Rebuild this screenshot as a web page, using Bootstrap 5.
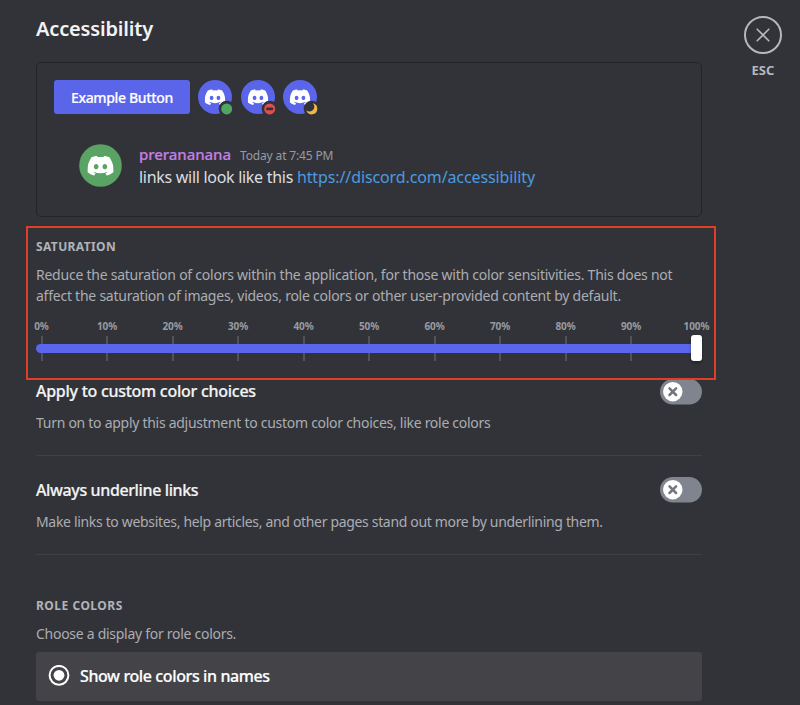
<!DOCTYPE html>
<html lang="en" data-bs-theme="dark">
<head>
<meta charset="utf-8">
<meta name="viewport" content="width=device-width, initial-scale=1">
<title>Accessibility</title>
<link href="https://cdn.jsdelivr.net/npm/bootstrap@5.3.0/dist/css/bootstrap.min.css" rel="stylesheet">
<style>
  body { background: #323338; color: #b5bac1; font: 400 14px/20px "Noto Sans", "Liberation Sans", sans-serif; }
  .settings { width: 666px; margin-left: 36px; padding-top: 17px; }
  .page-title { font-size: 20px; line-height: 24px; font-weight: 600; letter-spacing: -.17px; color: #f2f3f5; margin-bottom: 21px; }
  .preview .btn, .user-name, .option h2, .role-choice { -webkit-text-stroke: .2px currentColor; }

  .preview { height: 155px; padding: 17px; border: 1.5px solid #232428; border-radius: 5px; background: none; }
  .preview .btn { width: 136px; height: 34px; padding: 0; border: 0; border-radius: 3px; background: #5a65ea; color: #fff; font-size: 14px; font-weight: 500; letter-spacing: -.34px; }
  .status-list { gap: 8.5px; margin-left: 8px; }
  .status-list svg { width: 34px; height: 34px; display: block; overflow: visible; }
  .message { margin: 29px 0 0 25px; gap: 17px; }
  .message svg { width: 43px; height: 43px; flex: none; margin-top: 1px; }
  .user-name { font-size: 15px; line-height: 22px; font-weight: 500; letter-spacing: -.05px; color: #c57ee4; }
  .timestamp { font-size: 12px; letter-spacing: -.15px; color: #949ba4; margin-left: 1px; }
  .message-text { font-size: 16px; line-height: 23px; letter-spacing: -.29px; color: #dbdee1; }
  .message-text a { color: #4a9be0; letter-spacing: -.11px; text-decoration: none; }

  .highlight { z-index: 1; height: 154px; margin: 9px -14px 0 -10px; padding: 11px 12px 0 8px; border: 2px solid #e03e26; }
  .eyebrow { font-size: 12px; line-height: 16px; font-weight: 700; letter-spacing: .38px; color: #b0b3b9; margin: 0; }
  .roles .eyebrow { letter-spacing: .5px; }
  .hint { letter-spacing: -.28px; color: #abadb3; margin: 0; }
  .highlight .hint { line-height: 21.3px; letter-spacing: -.24px; margin-top: 9px; }

  .slider { display: grid; margin-top: 12px; width: 666px; }
  .slider > * { grid-column: 1; }
  .marks { grid-row: 1; padding: 0 5px 0 5px; }
  .marks > div { width: 1px; }
  .marks span { font-size: 10px; line-height: 14px; font-weight: 700; letter-spacing: -.1px; color: #989ba1; white-space: nowrap; }
  .marks i { width: 2px; height: 25px; margin-top: 3px; background: #505259; flex: none; }
  .track { grid-row: 1; height: 9px; margin-top: 25px; width: 661px; border-radius: 5px; background: #5b66ec; z-index: 1; }
  .thumb { grid-row: 1; justify-self: end; width: 11px; height: 26px; margin-top: 16px; border-radius: 3px; background: #fff; box-shadow: 0 2px 3px rgba(0,0,0,.3); z-index: 2; }

  .option { padding-bottom: 22px; border-bottom: 1px solid #3e4046; }
  .option + .option { margin-top: 22.5px; }
  .option h2 { font-size: 16px; line-height: 23px; font-weight: 500; letter-spacing: -.27px; color: #f2f3f5; margin: 0; }
  .option + .option h2 { letter-spacing: -.38px; }
  .option .hint { margin-top: 10px; }
  .option + .option .hint { letter-spacing: -.33px; }
  .switch { width: 42px; height: 26px; margin-top: -1.5px; flex: none; }
  .roles { margin-top: 43px; }
  .roles .hint { margin-top: 10px; }
  .role-choice { height: 49px; margin-top: 8px; padding-left: 12px; gap: 10px; border-radius: 3px; background: #434348; color: #fff; font-size: 16px; font-weight: 500; letter-spacing: -.39px; }

  .close-tool { right: 17px; top: 16px; width: 40px; color: #b5b8bd; font-size: 13px; line-height: 16px; font-weight: 700; }
</style>
</head>
<body class="overflow-hidden vh-100">
<svg class="d-none">
  <symbol id="logo" viewBox="0 1.9 16 12.2"><path fill="#fff" d="M13.545 2.907a13.227 13.227 0 0 0-3.257-1.011.05.05 0 0 0-.052.025c-.141.25-.297.577-.406.833a12.19 12.19 0 0 0-3.658 0 8.258 8.258 0 0 0-.412-.833.051.051 0 0 0-.052-.025c-1.125.194-2.22.534-3.257 1.011a.041.041 0 0 0-.021.018C.356 6.024-.213 9.047.066 12.032c.001.014.01.028.021.037a13.276 13.276 0 0 0 3.995 2.02.05.05 0 0 0 .056-.019c.308-.42.582-.863.818-1.329a.05.05 0 0 0-.01-.059.051.051 0 0 0-.018-.011 8.875 8.875 0 0 1-1.248-.595.05.05 0 0 1-.02-.066.051.051 0 0 1 .015-.019c.084-.063.168-.129.248-.195a.05.05 0 0 1 .051-.007c2.619 1.196 5.454 1.196 8.041 0a.052.052 0 0 1 .053.007c.08.066.164.132.248.195a.051.051 0 0 1-.004.085 8.254 8.254 0 0 1-1.249.594.05.05 0 0 0-.03.03.052.052 0 0 0 .003.041c.24.465.515.909.817 1.329a.05.05 0 0 0 .056.019 13.235 13.235 0 0 0 4.001-2.02.049.049 0 0 0 .021-.037c.334-3.451-.559-6.449-2.366-9.106a.034.034 0 0 0-.02-.019Zm-8.198 7.307c-.789 0-1.438-.724-1.438-1.612 0-.889.637-1.613 1.438-1.613.807 0 1.45.73 1.438 1.613 0 .888-.637 1.612-1.438 1.612Zm5.316 0c-.788 0-1.438-.724-1.438-1.612 0-.889.637-1.613 1.438-1.613.807 0 1.451.73 1.438 1.613 0 .888-.631 1.612-1.438 1.612Z"/></symbol>
  <symbol id="avatar" viewBox="0 0 34 34" overflow="visible"><circle cx="17" cy="17" r="17" fill="#5a65ea"/><use href="#logo" x="6.7" y="9.3" width="20.6" height="15.7"/><circle cx="28.7" cy="28.7" r="8" fill="#323338"/></symbol>
  <symbol id="switch-off" viewBox="0 0 42 26"><rect width="42" height="25.5" rx="12.75" fill="#80848e"/><circle cx="12.8" cy="12.7" r="9.7" fill="#fff"/><path d="M9.5 9.4l6.6 6.6m0-6.6l-6.6 6.6" stroke="#747780" stroke-width="2.5" stroke-linecap="round"/></symbol>
</svg>

<main class="settings">
  <h1 class="page-title">Accessibility</h1>

  <div class="preview card">
    <div class="d-flex align-items-center">
      <button class="btn" type="button">Example Button</button>
      <div class="status-list d-flex">
        <svg viewBox="0 0 34 34"><use href="#avatar" width="34" height="34"/><circle cx="28.7" cy="28.9" r="5.5" fill="#4fa562"/></svg>
        <svg viewBox="0 0 34 34"><use href="#avatar" width="34" height="34"/><circle cx="28.7" cy="28.9" r="5.5" fill="#df4e4e"/><rect x="25.1" y="27.5" width="7.2" height="2.7" rx="1.3" fill="#323338"/></svg>
        <svg viewBox="0 0 34 34"><use href="#avatar" width="34" height="34"/><path d="M29.8 23.3a5.6 5.6 0 1 1-6.5 7A4.6 4.6 0 0 0 29.8 23.3Z" fill="#edb74d"/></svg>
      </div>
    </div>
    <div class="message d-flex">
      <svg viewBox="0 0 43 43"><circle cx="21.5" cy="21.5" r="21.3" fill="#5aa364"/><use href="#logo" x="8.4" y="11.7" width="26.2" height="20"/></svg>
      <div>
        <div class="d-flex align-items-baseline gap-2"><span class="user-name">prerananana</span><span class="timestamp">Today at 7:45 PM</span></div>
        <div class="message-text">links will look like this <a href="#">https://discord.com/accessibility</a></div>
      </div>
    </div>
  </div>

  <section class="highlight position-relative">
    <h2 class="eyebrow">SATURATION</h2>
    <p class="hint text-nowrap">Reduce the saturation of colors within the application, for those with color sensitivities. This does not<br>affect the saturation of images, videos, role colors or other user-provided content by default.</p>
    <div class="slider">
      <div class="marks d-flex justify-content-between">
        <div class="d-flex flex-column align-items-center"><span>0%</span><i></i></div>
        <div class="d-flex flex-column align-items-center"><span>10%</span><i></i></div>
        <div class="d-flex flex-column align-items-center"><span>20%</span><i></i></div>
        <div class="d-flex flex-column align-items-center"><span>30%</span><i></i></div>
        <div class="d-flex flex-column align-items-center"><span>40%</span><i></i></div>
        <div class="d-flex flex-column align-items-center"><span>50%</span><i></i></div>
        <div class="d-flex flex-column align-items-center"><span>60%</span><i></i></div>
        <div class="d-flex flex-column align-items-center"><span>70%</span><i></i></div>
        <div class="d-flex flex-column align-items-center"><span>80%</span><i></i></div>
        <div class="d-flex flex-column align-items-center"><span>90%</span><i></i></div>
        <div class="d-flex flex-column align-items-center"><span>100%</span><i></i></div>
      </div>
      <div class="track"></div>
      <div class="thumb"></div>
    </div>
  </section>

  <section class="option d-flex justify-content-between align-items-start">
    <div><h2>Apply to custom color choices</h2><p class="hint">Turn on to apply this adjustment to custom color choices, like role colors</p></div>
    <svg class="switch" role="switch"><use href="#switch-off"/></svg>
  </section>
  <section class="option d-flex justify-content-between align-items-start">
    <div><h2>Always underline links</h2><p class="hint">Make links to websites, help articles, and other pages stand out more by underlining them.</p></div>
    <svg class="switch" role="switch"><use href="#switch-off"/></svg>
  </section>

  <section class="roles">
    <h2 class="eyebrow">ROLE COLORS</h2>
    <p class="hint">Choose a display for role colors.</p>
    <div class="role-choice d-flex align-items-center">
      <svg width="22" height="22" viewBox="0 0 22 22"><circle cx="11" cy="10.3" r="9.4" fill="none" stroke="#fff" stroke-width="2"/><circle cx="11" cy="10.3" r="5.4" fill="#fff"/></svg>
      <span>Show role colors in names</span>
    </div>
  </section>
</main>

<div class="close-tool position-absolute d-flex flex-column align-items-center">
  <svg width="38" height="38" viewBox="0 0 38 38" fill="none" stroke="currentColor"><circle cx="19" cy="19" r="18" stroke-width="2"/><path d="M13.2 13.2l11.6 11.6m0-11.6L13.2 24.8" stroke-width="1.6" stroke-linecap="round"/></svg>
  <span class="mt-2">ESC</span>
</div>
<script src="https://cdn.jsdelivr.net/npm/bootstrap@5.3.0/dist/js/bootstrap.bundle.min.js"></script>
</body>
</html>
